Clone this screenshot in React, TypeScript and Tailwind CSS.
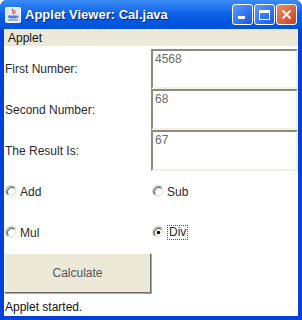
import React from "react";

function Radio({ checked }: { checked?: boolean }) {
  return (
    <svg width="13" height="13" viewBox="0 0 13 13" className="shrink-0">
      <circle cx="6.5" cy="6.5" r="5.5" fill="#ffffff" />
      <path d="M2.6 10.4 A5.5 5.5 0 0 1 10.4 2.6" fill="none" stroke="#8d8a7f" strokeWidth="1" />
      <path d="M3.4 9.6 A4.4 4.4 0 0 1 9.6 3.4" fill="none" stroke="#404040" strokeWidth="1" />
      <path d="M10.4 2.6 A5.5 5.5 0 0 1 2.6 10.4" fill="none" stroke="#f4f3ee" strokeWidth="1" />
      <path d="M9.6 3.4 A4.4 4.4 0 0 1 3.4 9.6" fill="none" stroke="#e0ddd0" strokeWidth="1" />
      {checked && <circle cx="6.5" cy="6.5" r="1.7" fill="#000000" />}
    </svg>
  );
}

function JavaIcon() {
  return (
    <svg width="16" height="16" viewBox="0 0 16 16">
      <rect x="0.5" y="0.5" width="15" height="15" rx="1" fill="#dfe8f6" stroke="#ffffff" />
      <path d="M8 2 C6 4 10 5 8 7" fill="none" stroke="#e2401c" strokeWidth="1.3" />
      <path d="M10 3 C9 4 11 5 9.5 6.5" fill="none" stroke="#e2401c" strokeWidth="1" />
      <path d="M3 8.5 H12 V10 C12 12 4 12 3 10 Z" fill="#5a7ec7" />
      <path d="M12 9 C14 9 14 11 11.5 11" fill="none" stroke="#5a7ec7" strokeWidth="1" />
      <path d="M3 13 H13" stroke="#5a7ec7" strokeWidth="1.2" />
    </svg>
  );
}

function Field({ value }: { value: string }) {
  return (
    <div className="h-full border-2 border-t-[#8d8a7f] border-l-[#8d8a7f] border-b-[#f1efe2] border-r-[#f1efe2] bg-white px-[2px] pt-[1px] text-[12px] leading-[14px] text-[#6b6b6b]">
      {value}
    </div>
  );
}

export default function App() {
  return (
    <div
      className="w-[302px] h-[320px] flex flex-col bg-[#0041dc] rounded-t-[7px] overflow-hidden"
      style={{ fontFamily: '"Liberation Sans", Arial, sans-serif' }}
    >
      <div className="h-[29px] shrink-0 flex items-center pl-[5px] pr-[5px] bg-gradient-to-b from-[#3b8cf6] via-[#0a5fe8] to-[#0051d8]">
        <JavaIcon />
        <span className="ml-[4px] text-white font-bold text-[13px] [text-shadow:1px_1px_0_#0a1f80]">
          Applet Viewer: Cal.java
        </span>
        <div className="ml-auto flex gap-[1px]">
          <div className="w-[21px] h-[21px] rounded-[3px] border border-white bg-gradient-to-br from-[#5c9bff] to-[#1b55e0] flex items-end pl-[5px] pb-[5px]">
            <div className="w-[7px] h-[3px] bg-white" />
          </div>
          <div className="w-[21px] h-[21px] rounded-[3px] border border-white bg-gradient-to-br from-[#5c9bff] to-[#1b55e0] flex items-center justify-center">
            <div className="w-[11px] h-[10px] border border-white border-t-[3px]" />
          </div>
          <div className="w-[21px] h-[21px] rounded-[3px] border border-white bg-gradient-to-br from-[#e98a6a] to-[#c7401c] flex items-center justify-center">
            <svg width="11" height="11" viewBox="0 0 11 11">
              <path d="M1.5 1.5 L9.5 9.5 M9.5 1.5 L1.5 9.5" stroke="#ffffff" strokeWidth="2" />
            </svg>
          </div>
        </div>
      </div>
      <div className="flex-1 mx-[4px] mb-[4px] flex flex-col bg-white text-[12px] text-[#2a2a2a]">
        <div className="h-[17px] shrink-0 bg-[#ece9d8] pl-[4px] flex items-center text-[12px] text-[#111]">
          Applet
        </div>
        <div className="mt-[2px] grid grid-cols-[147px_147px] grid-rows-[41px_41px_41px_41px_41px_41px]">
          <div className="flex items-center pl-[1px]">First Number:</div>
          <div className="pt-[1px]"><Field value="4568" /></div>
          <div className="flex items-center pl-[1px]">Second Number:</div>
          <Field value="68" />
          <div className="flex items-center pl-[1px]">The Result Is:</div>
          <Field value="67" />
          <div className="flex items-center gap-[2px] pl-[1px]">
            <Radio />
            <span>Add</span>
          </div>
          <div className="flex items-center gap-[2px] pl-[1px]">
            <Radio />
            <span>Sub</span>
          </div>
          <div className="flex items-center gap-[2px] pl-[1px]">
            <Radio />
            <span>Mul</span>
          </div>
          <div className="flex items-center gap-[2px] pl-[1px]">
            <Radio checked />
            <span className="border border-dotted border-[#555] px-[1px] leading-[13px]">Div</span>
          </div>
          <div className="pb-[1px]">
            <div className="h-full bg-[#ece9d8] border border-t-white border-l-white border-b-[#716f64] border-r-[#716f64] shadow-[1px_1px_0_#aca899] flex items-center justify-center text-[#555]">
              Calculate
            </div>
          </div>
          <div />
        </div>
        <div className="flex-1 flex items-center pl-[1px] pt-[4px] text-[#111]">Applet started.</div>
      </div>
    </div>
  );
}
